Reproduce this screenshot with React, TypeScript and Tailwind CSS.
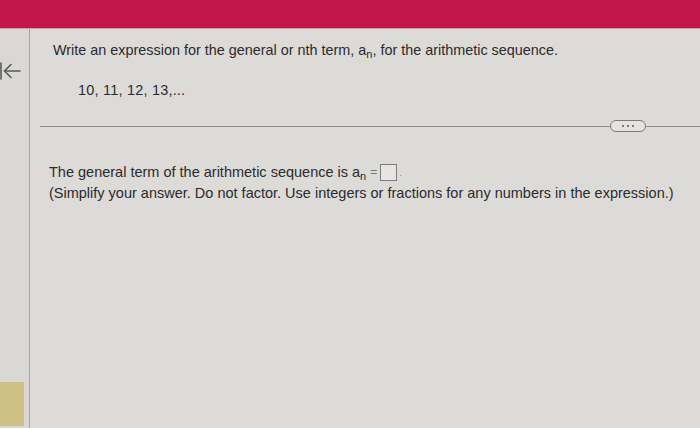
import React from "react";

function BackArrow() {
  return (
    <svg width="22" height="20" viewBox="0 0 22 20" fill="none" stroke="#5a5a5c" strokeWidth="1.6" strokeLinecap="round">
      <path d="M1 2v16" />
      <path d="M20 10H5" />
      <path d="M11 3.5L4.5 10l6.5 6.5" />
    </svg>
  );
}

function Sub({ children }: { children: React.ReactNode }) {
  return <sub className="text-[11px] relative top-[3px]">{children}</sub>;
}

export default function App() {
  return (
    <div className="w-[700px] h-[428px] overflow-hidden flex flex-col bg-[#dcdbd7] font-['Liberation_Sans',Arial,sans-serif] text-[#2b2b2d]">
      <div className="h-[29px] shrink-0 bg-[#c3164a] border-b border-[#b8a8ac]" />
      <div className="flex flex-1 min-h-0">
        <aside className="w-[30px] shrink-0 flex flex-col border-r border-[#a6a5a2] bg-[#d9d8d4]">
          <div className="pt-[32px]">
            <BackArrow />
          </div>
          <div className="mt-auto mb-[2px] h-[44px] w-[24px] bg-[#cdc283]" />
        </aside>
        <main className="flex-1 flex flex-col">
          <div className="pl-[23px] pt-[12px] text-[14.4px] leading-[18px]">
            Write an expression for the general or nth term, a<Sub>n</Sub>, for the arithmetic sequence.
          </div>
          <div className="pl-[48px] pt-[22px] text-[14.5px] leading-[18px] tracking-[0.2px]">10, 11, 12, 13,...</div>
          <div className="mt-[21px] ml-[10px] flex items-center">
            <div className="flex-1 h-px bg-[#8f8f8d]" />
            <button className="w-[36px] h-[12px] rounded-full border border-[#7a7a78] bg-[#e4e3df] flex items-center justify-center gap-[3px]">
              <span className="w-[2px] h-[2px] rounded-full bg-[#555]" />
              <span className="w-[2px] h-[2px] rounded-full bg-[#555]" />
              <span className="w-[2px] h-[2px] rounded-full bg-[#555]" />
            </button>
            <div className="w-[54px] h-px bg-[#8f8f8d]" />
          </div>
          <div className="pl-[19px] pt-[30px] text-[14.5px] leading-[21px]">
            <div className="flex items-center">
              <span>
                The general term of the arithmetic sequence is a<Sub>n</Sub>
              </span>
              <span className="ml-[4px] mr-[3px] text-[12px] text-[#7a7a78]">=</span>
              <span className="inline-block w-[17px] h-[17px] border border-[#7c7c7a] bg-[#e6e5e1]" />
              <span className="ml-[2px] text-[10px] text-[#888]">.</span>
            </div>
            <div>(Simplify your answer. Do not factor. Use integers or fractions for any numbers in the expression.)</div>
          </div>
        </main>
      </div>
    </div>
  );
}
